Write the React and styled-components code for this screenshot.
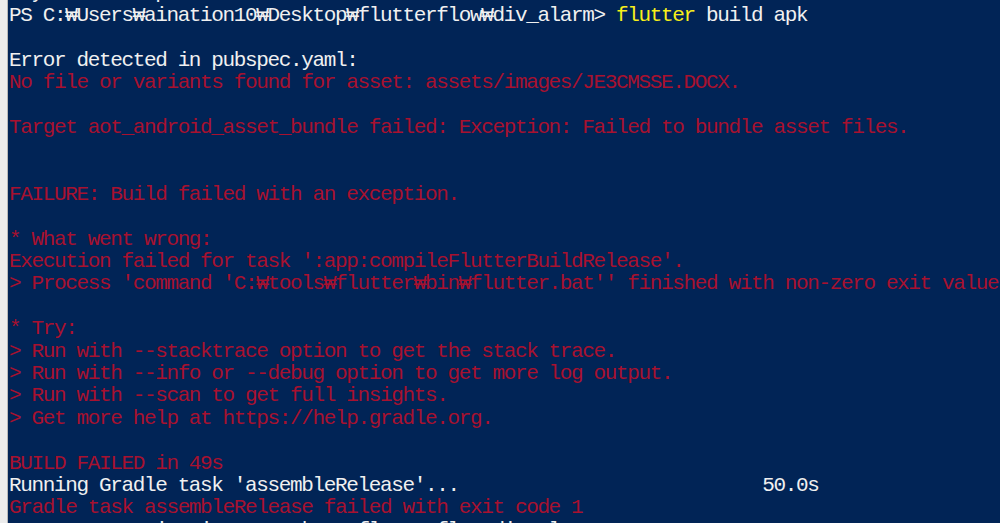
import React from "react";
import styled, { createGlobalStyle } from "styled-components";

const GlobalStyle = createGlobalStyle`
  html, body {
    margin: 0;
    padding: 0;
    background: #012456;
    overflow: hidden;
  }
`;

const Window = styled.div`
  display: flex;
  width: 1000px;
  height: 523px;
  overflow: hidden;
  background: #012456;
`;

const Frame = styled.div`
  width: 7px;
  flex: none;
  background: #ececec;
  border-right: 1px solid #b8b8b8;
`;

const Console = styled.pre`
  flex: 1;
  margin: -17.6px 0 0;
  padding: 0 0 0 1px;
  font-family: "Liberation Mono", "DejaVu Sans Mono", monospace;
  font-size: 21px;
  letter-spacing: -1.36px;
  line-height: 22.4px;
  white-space: pre;
  color: #f0f0f0;
`;

const colors = {
  white: "#f0f0f0",
  red: "#a8112f",
  yellow: "#f7ef1a",
};

const Line = styled.div`
  height: 22.4px;
  color: ${(p) => colors[p.$tone || "white"]};
`;

const Cmd = styled.span`
  color: ${colors.yellow};
`;

const prompt = "PS C:₩Users₩aination10₩Desktop₩flutterflow₩div_alarm>";

const lines = [
  ["white", "Try `flutter pub outdated` for more information."],
  ["white", null],
  ["white", ""],
  ["white", "Error detected in pubspec.yaml:"],
  ["red", "No file or variants found for asset: assets/images/JE3CMSSE.DOCX."],
  ["white", ""],
  ["red", "Target aot_android_asset_bundle failed: Exception: Failed to bundle asset files."],
  ["white", ""],
  ["white", ""],
  ["red", "FAILURE: Build failed with an exception."],
  ["white", ""],
  ["red", "* What went wrong:"],
  ["red", "Execution failed for task ':app:compileFlutterBuildRelease'."],
  ["red", "> Process 'command 'C:₩tools₩flutter₩bin₩flutter.bat'' finished with non-zero exit value 1"],
  ["white", ""],
  ["red", "* Try:"],
  ["red", "> Run with --stacktrace option to get the stack trace."],
  ["red", "> Run with --info or --debug option to get more log output."],
  ["red", "> Run with --scan to get full insights."],
  ["red", "> Get more help at https://help.gradle.org."],
  ["white", ""],
  ["red", "BUILD FAILED in 49s"],
  ["white", "Running Gradle task 'assembleRelease'...                           50.0s"],
  ["red", "Gradle task assembleRelease failed with exit code 1"],
  ["white", prompt],
];

export default function App() {
  return (
    <>
      <GlobalStyle />
      <Window>
        <Frame />
        <Console>
          {lines.map(([tone, text], i) => (
            <Line key={i} $tone={tone}>
              {text === null ? (
                <>
                  {prompt} <Cmd>flutter</Cmd> build apk
                </>
              ) : (
                text || " "
              )}
            </Line>
          ))}
        </Console>
      </Window>
    </>
  );
}
